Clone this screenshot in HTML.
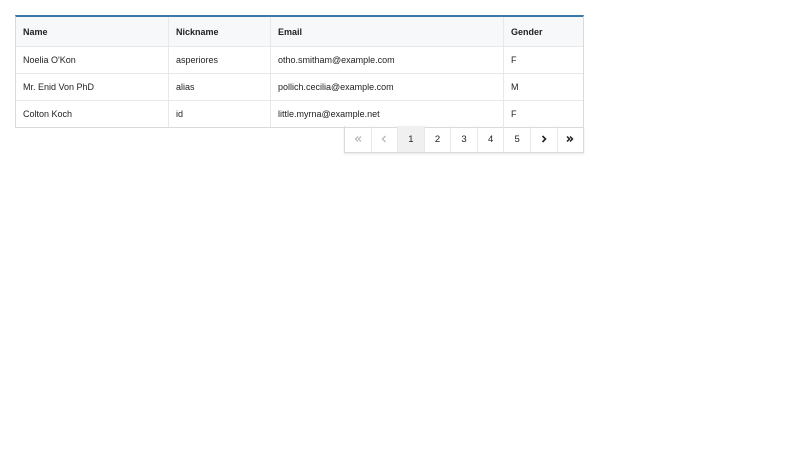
<html><head><style>
body{margin:0;background:#fff;font-family:"Liberation Sans",sans-serif;font-size:9px;color:#222}
.t{position:absolute;left:15px;top:15px;width:569px;border:1px solid #d8dadd;border-top:2px solid #3b78a8;box-sizing:border-box}
.r{display:flex;height:27px;border-top:1px solid #e6e8ea;box-sizing:border-box}
.r:first-child{border-top:none;height:29px;background:#f7f8f9;font-weight:bold}
.r div{box-sizing:border-box;padding-left:7px;display:flex;align-items:center;border-left:1px solid #e6e8ea}
.r div:first-child{border-left:none}
.c1{width:152px}.c2{width:102px}.c3{width:233px}.c4{flex:1}
.p{position:absolute;left:344px;top:126px;width:240px;height:27px;display:flex;border:1px solid #d8dadd;border-top:none;box-sizing:border-box;box-shadow:0 1px 2px rgba(0,0,0,.1)}
.p div{flex:1;box-sizing:border-box;display:flex;align-items:center;justify-content:center;border-left:1px solid #e6e8ea;font-size:9.5px}
.p div:first-child{border-left:none}
.a{background:#f0f0f0}
svg{width:10px;height:10px}
</style></head><body>
<div class="t">
<div class="r"><div class="c1">Name</div><div class="c2">Nickname</div><div class="c3">Email</div><div class="c4">Gender</div></div>
<div class="r"><div class="c1">Noelia O'Kon</div><div class="c2">asperiores</div><div class="c3">otho.smitham@example.com</div><div class="c4">F</div></div>
<div class="r"><div class="c1">Mr. Enid Von PhD</div><div class="c2">alias</div><div class="c3">pollich.cecilia@example.com</div><div class="c4">M</div></div>
<div class="r"><div class="c1">Colton Koch</div><div class="c2">id</div><div class="c3">little.myrna@example.net</div><div class="c4">F</div></div>
</div>
<div class="p">
<div><svg viewBox="0 0 10 10" fill="none" stroke="#bbb" stroke-width="1.3"><path d="M5 2.5L2.5 5 5 7.5M8 2.5L5.5 5 8 7.5"/></svg></div>
<div><svg viewBox="0 0 10 10" fill="none" stroke="#bbb" stroke-width="1.4"><path d="M6.5 2L3.5 5 6.5 8"/></svg></div>
<div class="a">1</div><div>2</div><div>3</div><div>4</div><div>5</div>
<div><svg viewBox="0 0 10 10" fill="none" stroke="#222" stroke-width="1.6"><path d="M3.5 2L6.5 5 3.5 8"/></svg></div>
<div><svg viewBox="0 0 10 10" fill="none" stroke="#222" stroke-width="1.5"><path d="M2 2.5L4.5 5 2 7.5M5 2.5L7.5 5 5 7.5"/></svg></div>
</div>
</body></html>
